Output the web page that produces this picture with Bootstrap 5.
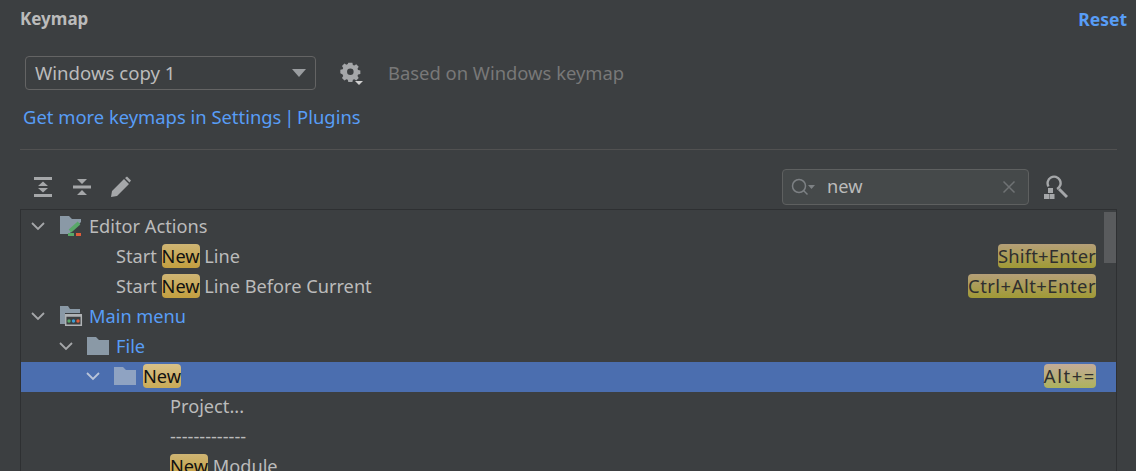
<!DOCTYPE html>
<html lang="en">
<head>
    <meta charset="UTF-8">
    <meta name="viewport" content="width=device-width, initial-scale=1.0">
    <title>Keymap</title>
    <link href="https://cdn.jsdelivr.net/npm/bootstrap@5.3.0/dist/css/bootstrap.min.css" rel="stylesheet">
    <style>
        html, body { height: 100%; overflow: hidden; }
        body {
            background-color: #3c3f41;
            color: #bbbbbb;
            font-family: "Noto Sans", "Open Sans", sans-serif;
            font-size: 18.2px;
            line-height: 30px;
        }
        .keymap-page { padding: 4px 9px 0 20px; }
        .page-title { font-weight: 700; font-size: 17px; color: #bbbbbb; }
        .reset-link { font-weight: 700; font-size: 17.5px; color: #589df6; text-decoration: none; }
        .keymap-row { margin-top: 22px; margin-left: 5px; height: 34px; }
        .keymap-select {
            width: 291px; height: 34px; padding: 0 9px;
            border: 1.5px solid #646464; border-radius: 4px;
            background: #3c3f41;
            font-size: 18.6px;
        }
        .select-arrow { width: 0; height: 0; border-left: 7px solid transparent; border-right: 7px solid transparent; border-top: 8px solid #9a9da0; }
        .gear-btn { margin-left: 22px; width: 26px; height: 26px; }
        .based-on { margin-left: 24px; color: #787878; font-size: 18.4px; }
        .more-link { margin-top: 12px; margin-left: 3px; color: #589df6; font-size: 18.4px; }
        .more-link a { color: #589df6; text-decoration: none; }
        .pipe-sep { margin: 0 -2px; }
        .divider { height: 1px; background: #515151; margin-top: 17px; margin-right: 10px; }
        .tool-row { height: 59px; padding-top: 14px; padding-left: 12px; padding-right: 39px; }
        .tool-row svg { display: block; }
        .tool-icons { gap: 17px; }
        .search-box {
            width: 247px; height: 36px; padding: 0 12px 0 8px;
            border: 1.5px solid #5e6060; border-radius: 4px;
            background: #45494a; color: #bbbbbb;
        }
        .search-text { margin-left: 12px; padding-bottom: 2px; }
        .filter-btn { margin-left: 15px; margin-right: 20px; }
        .tree-panel {
            position: relative;
            margin-right: 10px;
            height: 270px;
            padding-top: 2px;
            overflow: hidden;
            border-top: 1px solid #2e3032;
            border-left: 1px solid #2e3032;
            border-right: 1px solid #2e3032;
        }
        .tree-row { height: 30px; white-space: nowrap; padding-right: 20px; padding-bottom: 2px; }
        .tree-row.is-selected { background: #4b6eaf; padding-right: 20px; }
        .depth-0 { padding-left: 8px; }
        .depth-1 { padding-left: 36px; }
        .depth-2 { padding-left: 63px; }
        .leaf-1 { padding-left: 95px; }
        .leaf-3 { padding-left: 149px; }
        .chev { width: 18px; flex: none; margin-right: 12px; }
        .node-icon { flex: none; margin-right: 7px; }
        .depth-0 .node-icon { margin-right: 6px; }
        .blue-text { color: #589df6; }
        .hit {
            background: linear-gradient(#cfb574, #c39f3f);
            color: #111111;
            border-radius: 4px;
            height: 24px; line-height: 24px;
            display: inline-block;
        }
        .is-selected .hit { background: linear-gradient(#d8c088, #c9ab56); }
        .shortcut-hit {
            background: linear-gradient(#b59f78, #a09a35);
            color: #2f2f2f;
            border-radius: 4px;
            height: 24px; line-height: 24px;
            font-size: 18.4px;
        }
        .keys-shift { letter-spacing: .2px; }
        .keys-ctrl { letter-spacing: .5px; }
        .keys-alt { letter-spacing: 1.6px; }
        .is-selected .shortcut-hit { background: linear-gradient(#c4ab98, #adb25d); }
        .tree-scroll { position: absolute; top: 2px; right: 0; width: 12px; height: 51px; background: #595b5d; }
    </style>
</head>
<body>
    <div class="keymap-page">
        <div class="d-flex justify-content-between align-items-center">
            <div class="page-title">Keymap</div>
            <a class="reset-link" href="#">Reset</a>
        </div>

        <div class="keymap-row d-flex align-items-center">
            <div class="keymap-select d-flex align-items-center justify-content-between">
                <span>Windows copy 1</span>
                <span class="select-arrow"></span>
            </div>
            <svg class="gear-btn" viewBox="0 0 26 26">
                <path fill="#a5a7a9" fill-rule="evenodd" d="M9.5 2h5l.6 2.8 1.7.7 2.4-1.5 3 3-1.5 2.4.7 1.7 2.8.6v4.3l-2.8.6-.7 1.7 1.5 2.4-3 3-2.4-1.5-1.7.7-.6 2.8h-5l-.6-2.8-1.7-.7-2.4 1.5-3-3 1.5-2.4-.7-1.700L-.2 15v-4.300l2.800-.6.7-1.700-1.500-2.400 3-3 2.400 1.500 1.700-.7zM12 9a4 4 0 1 0 0 8 4 4 0 0 0 0-8z" transform="translate(2.500 1) scale(.82)"/>
                <path fill="#d0d0d0" d="M17 21h8l-4 4z"/>
            </svg>
            <span class="based-on">Based on Windows keymap</span>
        </div>

        <div class="more-link"><a href="#">Get more keymaps in Settings</a> <span class="pipe-sep">|</span> <a href="#">Plugins</a></div>
        <div class="divider"></div>

        <div class="tool-row d-flex align-items-center justify-content-between">
            <div class="tool-icons d-flex align-items-center">
                <svg width="22" height="22" viewBox="0 0 22 22"><path fill="#a5a7a9" d="M2 1h18v3H2zM2 18h18v3H2zM11 5.500l5 4.500H6zM11 16.500L6 12h10z"/></svg>
                <svg width="22" height="22" viewBox="0 0 22 22"><path fill="#a5a7a9" d="M2 9.500h18v3H2zM6 3h10l-5 5zM11 14l5 5H6z"/></svg>
                <svg width="22" height="22" viewBox="0 0 22 22"><path fill="#a5a7a9" d="M1 21l1-6L14 3l5 5L7 20zM15 2l2-1.500 4 4-1.500 2z"/></svg>
            </div>
            <div class="d-flex align-items-center">
                <div class="search-box d-flex align-items-center">
                    <svg width="24" height="20" viewBox="0 0 24 20"><circle cx="8" cy="9" r="6.500" fill="none" stroke="#7d8184" stroke-width="1.500"/><path stroke="#7d8184" stroke-width="1.500" d="M12.500 13.500l4 4"/><path fill="#7d8184" d="M17 8h7l-3.500 4z"/></svg>
                    <span class="search-text flex-grow-1">new</span>
                    <svg width="14" height="14" viewBox="0 0 14 14"><path stroke="#6f7274" stroke-width="1.500" d="M1.500 1.500l11 11M12.500 1.500l-11 11"/></svg>
                </div>
                <svg class="filter-btn" width="24" height="24" viewBox="0 0 24 24">
                    <path fill="none" stroke="#a5a7a9" stroke-width="2.400" d="M4.500 11.500A6.500 6.500 0 1 1 13 14"/>
                    <path stroke="#a5a7a9" stroke-width="3" d="M15 14l8 8"/>
                    <path fill="#a5a7a9" d="M4 13h5v5H4zM0 19h5v5H0zM5.500 19h5v5h-5z"/>
                </svg>
            </div>
        </div>

        <div class="tree-panel">
            <div class="tree-row depth-0 d-flex align-items-center">
                <svg class="chev" width="18" height="18" viewBox="0 0 18 18"><path d="M3 6l6 6 6-6" fill="none" stroke="#a5a7a9" stroke-width="1.800"/></svg>
                <svg class="node-icon" width="24" height="22" viewBox="0 0 24 22">
                    <path fill="#8a99a6" d="M1 1h9l3 3h9v15H1z"/>
                    <path fill="#3c3f41" d="M10 19l12-12v12z"/>
                    <path stroke="#59a869" stroke-width="4" d="M11 16l9-8"/>
                    <path fill="#59a869" d="M9 18h6v3H9z"/><path fill="#e05c3a" d="M17 18h5v3h-5z"/>
                </svg>
                <span>Editor Actions</span>
            </div>
            <div class="tree-row leaf-1 d-flex align-items-center justify-content-between">
                <span>Start <span class="hit">New</span> Line</span>
                <span class="shortcut-hit keys-shift">Shift+Enter</span>
            </div>
            <div class="tree-row leaf-1 d-flex align-items-center justify-content-between">
                <span>Start <span class="hit">New</span> Line Before Current</span>
                <span class="shortcut-hit keys-ctrl">Ctrl+Alt+Enter</span>
            </div>
            <div class="tree-row depth-0 d-flex align-items-center">
                <svg class="chev" width="18" height="18" viewBox="0 0 18 18"><path d="M3 6l6 6 6-6" fill="none" stroke="#a5a7a9" stroke-width="1.800"/></svg>
                <svg class="node-icon" width="24" height="22" viewBox="0 0 24 22">
                    <path fill="#8a99a6" d="M1 1h8l2 3h10v4H6v11H1z"/>
                    <path fill="#b0b3b5" d="M6 9h17v3H6z"/>
                    <path fill="#3c3f41" stroke="#b0b3b5" stroke-width="1.500" d="M6.700 11h15.600v9.300H6.700z"/>
                    <circle cx="10" cy="16" r="1.700" fill="#59a869"/><circle cx="14.500" cy="16" r="1.700" fill="#3e9fd8"/><circle cx="19" cy="16" r="1.700" fill="#e05c3a"/>
                </svg>
                <span class="blue-text">Main menu</span>
            </div>
            <div class="tree-row depth-1 d-flex align-items-center">
                <svg class="chev" width="18" height="18" viewBox="0 0 18 18"><path d="M3 6l6 6 6-6" fill="none" stroke="#a5a7a9" stroke-width="1.800"/></svg>
                <svg class="node-icon" width="22" height="18" viewBox="0 0 22 18"><path fill="#8a99a6" d="M0 0h9l3 3h10v15H0z"/></svg>
                <span class="blue-text">File</span>
            </div>
            <div class="tree-row is-selected depth-2 d-flex align-items-center justify-content-between">
                <span class="d-flex align-items-center">
                    <svg class="chev" width="18" height="18" viewBox="0 0 18 18"><path d="M3 6l6 6 6-6" fill="none" stroke="#b9c4d9" stroke-width="1.800"/></svg>
                    <svg class="node-icon" width="22" height="18" viewBox="0 0 22 18"><path fill="#8fa3c2" d="M0 0h9l3 3h10v15H0z"/></svg>
                    <span class="hit">New</span>
                </span>
                <span class="shortcut-hit keys-alt">Alt+=</span>
            </div>
            <div class="tree-row leaf-3 d-flex align-items-center"><span>Project...</span></div>
            <div class="tree-row leaf-3 d-flex align-items-center"><span>-------------</span></div>
            <div class="tree-row leaf-3 d-flex align-items-center"><span><span class="hit">New</span> Module</span></div>
            <div class="tree-scroll"></div>
        </div>
    </div>
    <script src="https://cdn.jsdelivr.net/npm/bootstrap@5.3.0/dist/js/bootstrap.bundle.min.js"></script>
</body>
</html>
